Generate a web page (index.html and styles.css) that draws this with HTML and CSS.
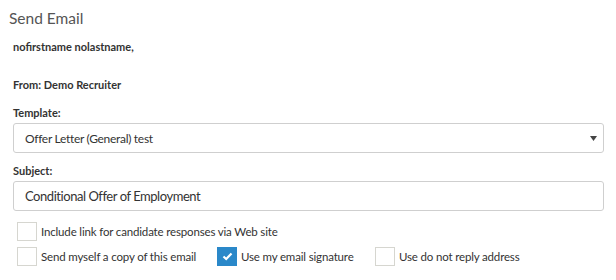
FILE: index.html
```html
<!DOCTYPE html>
<html>
<head>
<meta charset="utf-8">
<link rel="stylesheet" href="styles.css">
</head>
<body>
<div class="panel">
  <h1 class="title">Send Email</h1>
  <div class="recipient">nofirstname nolastname,</div>
  <div class="from">From: Demo Recruiter</div>
  <div class="label label-template">Template:</div>
  <div class="select">
    <span class="select-text">Offer Letter (General) test</span>
    <svg class="arrow" width="7" height="5" viewBox="0 0 7 5"><path d="M0 0H7L3.5 5Z" fill="#444"/></svg>
  </div>
  <div class="label label-subject">Subject:</div>
  <div class="input">Conditional Offer of Employment</div>
  <div class="checks">
    <div class="check-row">
      <label class="check"><span class="box"></span><span class="check-label">Include link for candidate responses via Web site</span></label>
    </div>
    <div class="check-row">
      <label class="check check-copy"><span class="box"></span><span class="check-label">Send myself a copy of this email</span></label>
      <label class="check check-sig"><span class="box box-on"><svg width="11" height="9" viewBox="0 0 11 9"><path d="M1.5 4.5L4.2 7L9.5 1.5" fill="none" stroke="#fff" stroke-width="2.2"/></svg></span><span class="check-label">Use my email signature</span></label>
      <label class="check"><span class="box"></span><span class="check-label">Use do not reply address</span></label>
    </div>
  </div>
</div>
</body>
</html>
```
FILE: styles.css
```css
html, body {
  margin: 0;
  padding: 0;
  background: #fff;
}
body {
  font-family: "Lato", "Liberation Sans", sans-serif;
  color: #333;
}
.panel {
  padding: 8px 12px 0 13px;
}
.title {
  margin: 0 0 0 -4px;
  font-size: 15.5px;
  line-height: 20px;
  font-weight: 400;
  color: #555;
}
.recipient, .from, .label {
  font-size: 11px;
  font-weight: 700;
  line-height: 14px;
  color: #333;
}
.recipient {
  margin-top: 12px;
}
.from {
  margin-top: 24px;
}
.label-template {
  margin-top: 14px;
}
.select, .input {
  box-sizing: border-box;
  height: 30px;
  border: 1px solid #cfcfcf;
  border-radius: 3px;
  display: flex;
  align-items: center;
  padding-left: 11px;
  padding-right: 6px;
}
.select {
  margin-top: 3px;
  justify-content: space-between;
  font-size: 12px;
  letter-spacing: -0.3px;
}
.arrow {
  margin-top: 1px;
}
.label-subject {
  margin-top: 11px;
}
.input {
  margin-top: 3px;
  font-size: 13px;
  letter-spacing: -0.45px;
}
.checks {
  padding-left: 4px;
  margin-top: 11px;
  display: flex;
  flex-direction: column;
  gap: 6px;
}
.check-row {
  display: flex;
  align-items: center;
  height: 19px;
}
.check {
  display: flex;
  align-items: center;
  font-size: 11.5px;
  letter-spacing: -0.16px;
  line-height: 19px;
}
.box {
  box-sizing: border-box;
  width: 20px;
  height: 19px;
  border: 1px solid #d6d6d0;
  background: #fff;
  margin-right: 4px;
  display: flex;
  align-items: center;
  justify-content: center;
}
.box-on {
  background: #2a88c9;
  border-color: #2a88c9;
}
.check-copy {
  width: 200px;
}
.check-sig {
  width: 158px;
}
```
